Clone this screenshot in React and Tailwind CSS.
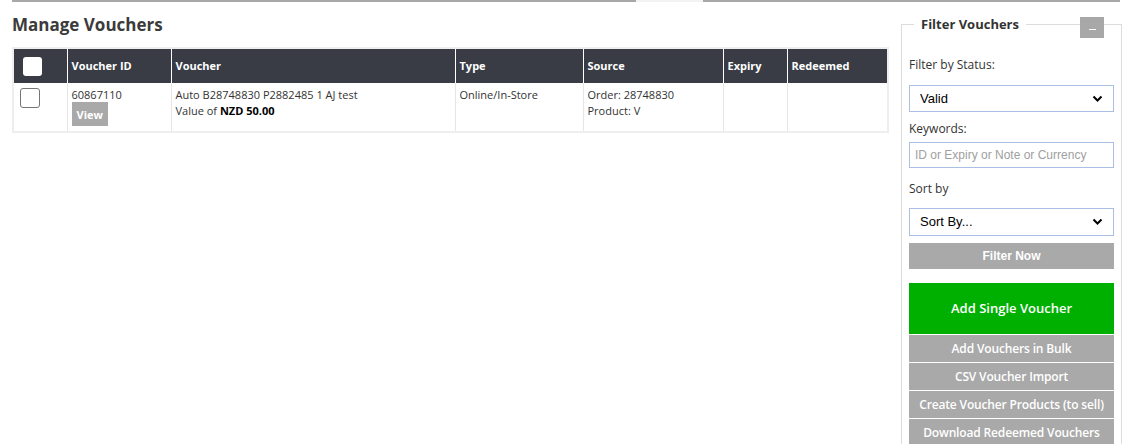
import React from "react";

const F = { fontFamily: '"Open Sans", "Noto Sans", sans-serif' };
const A = { fontFamily: '"Liberation Sans", Arial, sans-serif' };

function Chevron() {
  return (
    <svg width="11" height="8" viewBox="0 0 11 8" className="shrink-0">
      <path d="M1.5 1.5 L5.5 5.5 L9.5 1.5" fill="none" stroke="#000" strokeWidth="2" />
    </svg>
  );
}

export default function App() {
  const cols = [
    { w: "w-[53px]", label: null },
    { w: "w-[104px]", label: "Voucher ID" },
    { w: "w-[284px]", label: "Voucher" },
    { w: "w-[128px]", label: "Type" },
    { w: "w-[140px]", label: "Source" },
    { w: "w-[64px]", label: "Expiry" },
    { w: "w-[100px]", label: "Redeemed" },
  ];
  return (
    <div className="w-[1127px] h-[444px] bg-white overflow-hidden relative" style={F}>
      <div className="flex h-[2px] ml-[12px] w-[1108px]">
        <div className="w-[624px] bg-[#a8a8a8]" />
        <div className="w-[67px] bg-[#f3f3f3]" />
        <div className="flex-1 bg-[#a8a8a8]" />
      </div>
      <div className="flex">
        <div className="pl-[12px] w-[889px]">
          <h1 className="text-[17px] font-bold text-[#3b3b3b] mt-[12px] leading-[22px]">Manage Vouchers</h1>
          <div className="mt-[11px] border-2 border-[#eeeeee] w-[877px]">
            <table className="border-collapse table-fixed w-[873px] text-[11px]">
              <thead>
                <tr className="bg-[#393c45] h-[34px]">
                  {cols.map((c, i) => (
                    <th
                      key={i}
                      className={`${c.w} text-left align-middle text-white font-bold px-[4px] pt-[1px] ${i < cols.length - 1 ? "border-r border-[#ffffff]" : ""}`}
                    >
                      {i === 0 ? (
                        <div className="w-[19px] h-[19px] bg-white rounded-[3px] ml-[5px]" />
                      ) : (
                        <span>{c.label}</span>
                      )}
                    </th>
                  ))}
                </tr>
              </thead>
              <tbody>
                <tr className="h-[48px] align-top text-[#333]">
                  <td className="border-r border-[#e6e6e6] pl-[6px] pt-[5px]">
                    <div className="w-[20px] h-[20px] border border-[#767676] rounded-[3px] bg-white" />
                  </td>
                  <td className="border-r border-[#e6e6e6] px-[4px] pt-[4px] leading-[15px]">
                    <div>60867110</div>
                    <div className="inline-block bg-[#a9a9a9] text-white font-bold text-[11px] px-[5px] h-[24px] leading-[25px]">View</div>
                  </td>
                  <td className="border-r border-[#e6e6e6] px-[4px] pt-[4px] leading-[16px]">
                    <div>Auto B28748830 P2882485 1 AJ test</div>
                    <div>Value of <b className="text-black">NZD 50.00</b></div>
                  </td>
                  <td className="border-r border-[#e6e6e6] px-[4px] pt-[4px] leading-[16px]">Online/In-Store</td>
                  <td className="border-r border-[#e6e6e6] px-[4px] pt-[4px] leading-[16px]">
                    <div>Order: 28748830</div>
                    <div>Product: V</div>
                  </td>
                  <td className="border-r border-[#e6e6e6]"></td>
                  <td></td>
                </tr>
              </tbody>
            </table>
          </div>
        </div>
        <div className="ml-[12px] w-[221px] relative">
          <fieldset className="border border-[#dcdcdc] mt-[13px] px-[7px] pb-[10px] h-[460px]">
            <legend className="ml-[5px] px-[7px] text-[13px] font-bold text-[#333] leading-[18px]">Filter Vouchers</legend>
            <div className="absolute left-[179px] top-[15px] w-[24px] h-[21px] bg-[#a8a8a8] flex items-center justify-center">
              <div className="w-[7px] h-[1px] bg-white mt-[4px]" />
            </div>
            <div className="text-[12px] text-[#333] mt-[24px] leading-[16px]">Filter by Status:</div>
            <div className="mt-[12px] h-[27px] border border-[#a9c0e4] flex items-center justify-between px-[10px] text-[13px] text-black" style={A}>
              <span>Valid</span>
              <Chevron />
            </div>
            <div className="text-[12px] text-[#333] mt-[9px] leading-[16px]">Keywords:</div>
            <div className="mt-[5px] h-[26px] border border-[#a9c0e4] flex items-center px-[5px] text-[12px] text-[#a0a0a0]" style={A}>
              ID or Expiry or Note or Currency
            </div>
            <div className="text-[12px] text-[#333] mt-[13px] leading-[16px]">Sort by</div>
            <div className="mt-[11px] h-[28px] border border-[#a9c0e4] flex items-center justify-between px-[10px] text-[13px] text-black" style={A}>
              <span>Sort By...</span>
              <Chevron />
            </div>
            <div className="mt-[7px] h-[26px] bg-[#a9a9a9] text-white text-[12px] font-bold flex items-center justify-center" style={A}>
              Filter Now
            </div>
            <div className="mt-[14px] h-[51px] bg-[#00b000] text-white text-[13px] font-semibold flex items-center justify-center">
              Add Single Voucher
            </div>
            {["Add Vouchers in Bulk", "CSV Voucher Import", "Create Voucher Products (to sell)", "Download Redeemed Vouchers"].map((t) => (
              <div key={t} className="mt-[1px] h-[27px] bg-[#a9a9a9] text-white text-[12px] font-semibold flex items-center justify-center tracking-[-0.15px]">
                {t}
              </div>
            ))}
          </fieldset>
        </div>
      </div>
    </div>
  );
}
